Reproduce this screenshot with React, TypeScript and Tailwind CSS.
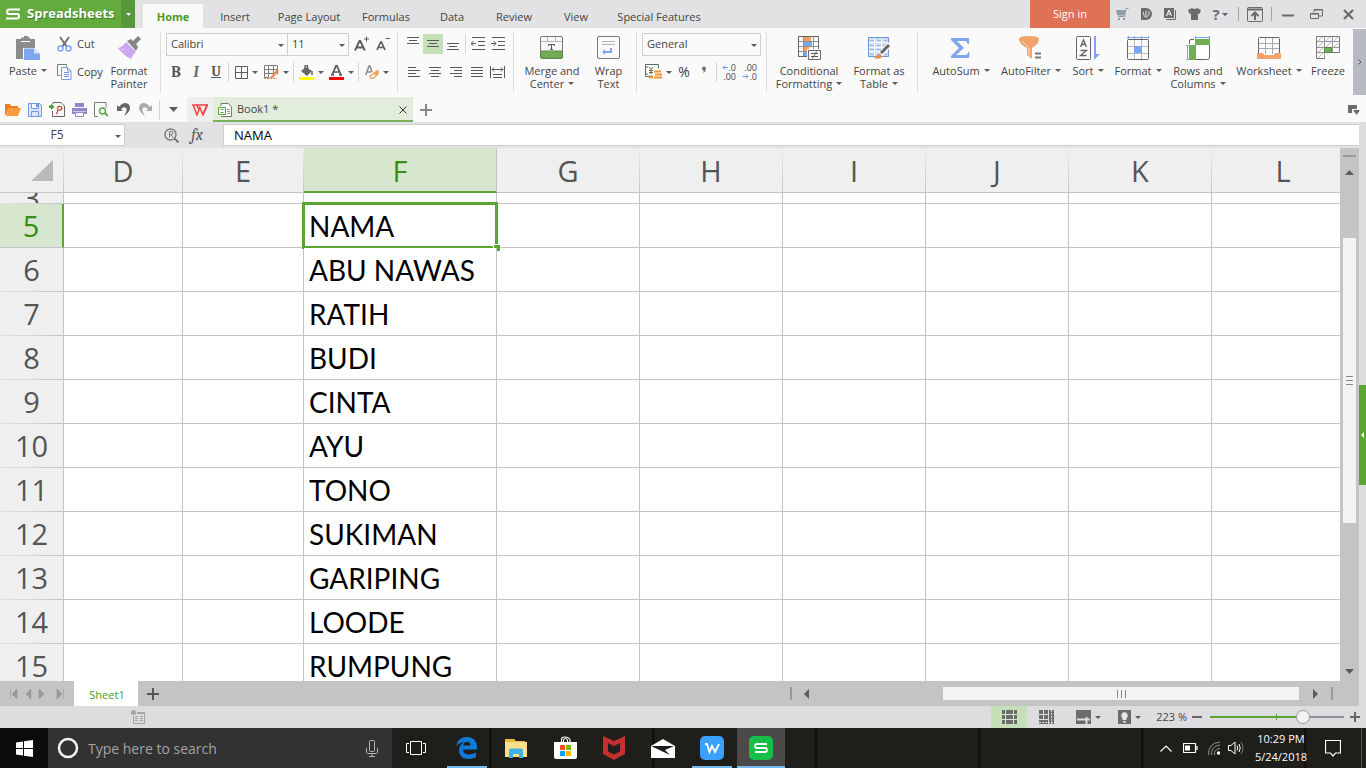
import React, { useState } from 'react';
import clsx from 'clsx';

type IconProps = {
  readonly w: number;
  readonly h: number;
  readonly className?: string;
  readonly children: React.ReactNode;
};

const Icon: React.FunctionComponent<IconProps> = ({
  w,
  h,
  className,
  children,
}) => (
  <svg
    width={w}
    height={h}
    viewBox={`0 0 ${w} ${h}`}
    className={clsx('shrink-0', className)}
    fill="none"
    aria-hidden="true"
  >
    {children}
  </svg>
);

const gray = '#6b6b6b';
const blue = '#7ea6f0';
const orange = '#f2a36b';
const green = '#72ad55';

const Caret: React.FunctionComponent<{ className?: string }> = ({
  className,
}) => (
  <Icon w={6} h={3} className={className}>
    <path d="M0 0h6L3 3z" fill="#5c5c5c" />
  </Icon>
);

// Draws a stack of horizontal strokes, used by all the alignment icons.
const Lines: React.FunctionComponent<{
  rows: [number, number, number][];
  h?: number;
  children?: React.ReactNode;
}> = ({ rows, h = 14, children }) => (
  <Icon w={14} h={h}>
    {rows.map(([x1, x2, y]) => (
      <path key={y} d={`M${x1} ${y + 0.5}H${x2}`} stroke="#595959" />
    ))}
    {children}
  </Icon>
);

/* ---------- title bar ---------- */

const tabs = [
  { title: 'Home', width: 'w-[60px]' },
  { title: 'Insert', width: 'w-16' },
  { title: 'Page Layout', width: 'w-[84px]' },
  { title: 'Formulas', width: 'w-[70px]' },
  { title: 'Data', width: 'w-[62px]' },
  { title: 'Review', width: 'w-[62px]' },
  { title: 'View', width: 'w-[62px]' },
  { title: 'Special Features', width: 'w-[104px]' },
];

const TitleBar = () => {
  const [active, setActive] = useState('Home');

  return (
    <header className="flex h-7 shrink-0 bg-[#e2e2e4]">
      <button className="flex w-[121px] items-center gap-[7px] bg-[#62ab3c] pl-[6px] text-[13px] font-bold text-white [text-shadow:1px_1px_0_#3f7d22]">
        <Icon w={14} h={12}>
          <path
            d="M14 1.5H3Q1.2 1.5 1.2 3.7T3 6h8.4q1.6 0 1.6 2.2T11.4 10.5H0"
            stroke="#fff"
            strokeWidth="2.2"
          />
        </Icon>
        Spreadsheets
      </button>
      <button
        aria-label="Application menu"
        className="flex w-[14px] items-center justify-center bg-[#57993a]"
      >
        <Icon w={5} h={3}>
          <path d="M0 0h5L2.500 3z" fill="#fff" />
        </Icon>
      </button>
      <nav className="ml-2 flex pt-1">
        {tabs.map((tab) => (
          <button
            key={tab.title}
            onClick={() => setActive(tab.title)}
            className={clsx(
              'pt-[2px] whitespace-nowrap',
              tab.width,
              active === tab.title
                ? 'bg-[#fafafa] font-bold text-[#4b9a28]'
                : 'text-[#444]'
            )}
          >
            {tab.title}
          </button>
        ))}
      </nav>
      <button className="ml-auto w-20 bg-[#df7254] text-white">Sign in</button>
      <div className="flex items-center pr-[2px]">
        <button aria-label="Store" className="flex w-6 justify-center">
          <Icon w={13} h={12}>
            <path d="M12.500.5H10L8.500 8.500H2" stroke="#929aa4" />
            <path d="M0 2h9.500L8.500 7.500H1.500zM2 10h2v2H2zM7 10h2v2H7z" fill="#929aa4" />
          </Icon>
        </button>
        <button aria-label="Docer" className="flex w-6 justify-center">
          <Icon w={11} h={12}>
            <path d="M0 0h5a6 6 0 0 1 0 12H0z" fill={gray} />
            <path d="M2.500 4q0 5 3 5.500M5 2.500v6M8 3q1 4-2.500 6.500" stroke="#e2e2e4" />
          </Icon>
        </button>
        <button aria-label="Fonts" className="flex w-6 justify-center">
          <Icon w={12} h={12}>
            <path d="M0 0h10v10H0z" fill={gray} />
            <path d="M11.500 2v9.500H2" stroke={gray} />
            <path d="M2.500 8 5 2l2.500 6M3.500 6h3" stroke="#fff" />
          </Icon>
        </button>
        <button aria-label="Skin" className="flex w-6 justify-center">
          <Icon w={13} h={12}>
            <path d="M0 2 4 0q2.500 2 5 0l4 2-1.500 4-1.500-.5V12H3V5.500L1.500 6z" fill={gray} />
          </Icon>
        </button>
        <button
          aria-label="Help"
          className="flex w-7 items-center justify-center gap-[2px] text-[15px] font-bold text-[#6b6b6b]"
        >
          ?<Caret />
        </button>
        <span className="mx-1 h-[14px] w-px bg-[#a5a5a7]" />
        <button aria-label="Hide ribbon" className="flex w-6 justify-center">
          <Icon w={16} h={15}>
            <rect x=".5" y=".5" width="15" height="14" rx="1" stroke={gray} />
            <path d="M1 2.500h14" stroke={gray} strokeWidth="2" />
            <path d="M8 13V6M4.500 9 8 5.500 11.500 9" stroke={gray} strokeWidth="2" />
          </Icon>
        </button>
        <span className="mx-1 h-[14px] w-px bg-[#a5a5a7]" />
        <button aria-label="Minimize" className="flex w-6 justify-center">
          <Icon w={12} h={12}>
            <path d="M0 7.500h12" stroke={gray} strokeWidth="2" />
          </Icon>
        </button>
        <button aria-label="Restore" className="flex w-8 justify-center">
          <Icon w={13} h={11}>
            <path d="M.5 4.500h8v5h-8zM.5 5h8M4 3.500v-3h8.500V7H9M4 1h8" stroke={gray} />
          </Icon>
        </button>
        <button aria-label="Close" className="flex w-8 justify-center">
          <Icon w={11} h={11}>
            <path d="m1 1 9 9M10 1l-9 9" stroke={gray} strokeWidth="2.200" />
          </Icon>
        </button>
      </div>
    </header>
  );
};

/* ---------- ribbon ---------- */

type BigButtonProps = {
  readonly width: string;
  readonly lines: string[];
  readonly caret?: boolean;
  readonly icon: React.ReactNode;
};

const BigButton: React.FunctionComponent<BigButtonProps> = ({
  width,
  lines,
  caret,
  icon,
}) => (
  <button
    className={clsx('flex shrink-0 flex-col items-center gap-1 pt-2', width)}
  >
    <span className="flex h-6 items-center">{icon}</span>
    <span className="block leading-[13px] whitespace-nowrap">
      {lines.map((line, i) => (
        <span key={line} className="flex items-center justify-center gap-1">
          {line}
          {caret && i === lines.length - 1 && <Caret />}
        </span>
      ))}
    </span>
  </button>
);

type ToolProps = {
  readonly label: string;
  readonly className?: string;
  readonly caret?: boolean;
  readonly children: React.ReactNode;
};

const Tool: React.FunctionComponent<ToolProps> = ({
  label,
  className = 'w-5',
  caret,
  children,
}) => (
  <button
    aria-label={label}
    className={clsx('flex h-5 items-center justify-center gap-1', className)}
  >
    {children}
    {caret && <Caret />}
  </button>
);

const Rule = () => <span className="mx-[2px] h-5 w-px bg-[#d4d4d6]" />;
const GroupRule = () => (
  <span className="mt-1 h-[60px] w-px shrink-0 bg-[#dcdcde]" />
);

const Picker: React.FunctionComponent<{
  label: string;
  value: string;
  className: string;
}> = ({ label, value, className }) => (
  <span
    className={clsx(
      'relative flex h-[23px] border border-[#cfcfd1] bg-[#fafafa]',
      className
    )}
  >
    <select
      aria-label={label}
      defaultValue={value}
      className="w-full appearance-none pl-1 outline-none"
    >
      <option>{value}</option>
    </select>
    <Caret className="pointer-events-none absolute top-[10px] right-[3px]" />
  </span>
);

const ClipboardGroup = () => (
  <section className="flex w-40 shrink-0">
    <BigButton
      width="w-14"
      lines={['Paste']}
      caret
      icon={
        <Icon w={24} h={24}>
          <path d="M0 3h5V1.500h3V0h4v1.500h2V3h5v9H7v11H0z" fill="#8c8c8c" />
          <path d="M5 5.500h9" stroke="#fafafa" />
          <path d="M8 12.500h10l6 5V24H8z" fill={blue} />
          <path d="M18 12.500v5h6z" fill="#fff" opacity=".7" />
        </Icon>
      }
    />
    <div className="flex w-12 flex-col gap-1 pt-1">
      <button className="flex h-6 items-center gap-[5px] pl-px">
        <Icon w={15} h={16}>
          <path d="m3 1 7 10M12 1 5 11" stroke={gray} strokeWidth="1.800" />
          <circle cx="3.500" cy="12.500" r="2.500" stroke={blue} strokeWidth="1.500" />
          <circle cx="11.500" cy="12.500" r="2.500" stroke={blue} strokeWidth="1.500" />
        </Icon>
        Cut
      </button>
      <button className="flex h-6 items-center gap-[5px] pl-px">
        <Icon w={15} h={16}>
          <path d="M3.500 11.500H.5V.5h9v2" stroke="#7d7d7d" />
          <path d="M4.500 3.500h6l3.500 3.500v8.500H4.500zM10.500 3.500V7H14M7 8.500h5M7 10.500h5M7 12.500h5" stroke="#6f99ea" />
        </Icon>
        Copy
      </button>
    </div>
    <BigButton
      width="w-[50px]"
      lines={['Format', 'Painter']}
      icon={
        <Icon w={23} h={24}>
          <path d="m9 5 4-2 2 2 5-5 3 3-5 5 2 3-2 4z" fill="#858585" />
          <path d="m8 6 10 10q-3 2-5 7Q6 20 0 12q5-1 8-6z" fill="#cda4f0" />
          <path d="m3 14 3-1M6 18l2-2" stroke="#e5cff8" />
        </Icon>
      }
    />
  </section>
);

const FontGroup = () => (
  <section className="flex w-[236px] shrink-0 flex-col gap-[6px] pt-[5px] pl-[5px]">
    <div className="flex">
      <Picker label="Font" value="Calibri" className="w-[122px]" />
      <Picker label="Font size" value="11" className="-ml-px w-[62px]" />
      <Tool label="Grow font" className="w-6">
        <Icon w={15} h={15}>
          <path d="M1 14.500 5.500 5h.8l4.500 9.500M3 11.500h6" stroke="#5d5d5d" strokeWidth="1.900" />
          <path d="M12.500.5v5M10 3h5" stroke="#5d5d5d" />
        </Icon>
      </Tool>
      <Tool label="Shrink font" className="w-5">
        <Icon w={14} h={15}>
          <path d="M1 14 4.700 6h.7L9 14M2.500 11.500h5" stroke="#5d5d5d" strokeWidth="1.700" />
          <path d="M9.500 2.500H14" stroke="#5d5d5d" />
        </Icon>
      </Tool>
    </div>
    <div className="flex items-center">
      <button className="h-5 w-5 font-serif text-[15px] leading-5 font-bold text-[#555]">
        B
      </button>
      <button className="h-5 w-5 font-serif text-[15px] leading-5 font-bold text-[#666] italic">
        I
      </button>
      <button className="h-5 w-5 font-serif text-[14px] leading-5 font-bold text-[#555] underline">
        U
      </button>
      <Rule />
      <Tool label="Borders" className="w-[30px]" caret>
        <Icon w={13} h={13}>
          <path d="M.5.5h12v12H.5zM6.500.5v12M.5 6.500h12" stroke="#5d5d5d" />
        </Icon>
      </Tool>
      <Tool label="Draw border" className="w-[30px]" caret>
        <Icon w={15} h={14}>
          <path d="M.5.5h13v9M.5.5v12h5M4.500.5v12M9.500.5v8M.5 4.500h13M.5 8.500h9" stroke="#7d7d7d" />
          <path d="m7 13 7-8" stroke="#f08345" strokeWidth="2.200" />
          <path d="M0 13.500h13" stroke="#f08345" strokeDasharray="2 1" />
        </Icon>
      </Tool>
      <Rule />
      <Tool label="Fill color" className="w-[30px]" caret>
        <Icon w={15} h={15}>
          <path d="m2 6 5-4 6 4-5 5z" fill="#666" />
          <path d="M6 5V1q1.500-2 2.500 0v3M13 6v4" stroke="#666" strokeWidth="1.500" />
          <path d="M0 12h15v3H0z" fill="#ff0" />
        </Icon>
      </Tool>
      <Tool label="Font color" className="w-[30px]" caret>
        <Icon w={15} h={15}>
          <path d="M3 10 7 .8h1L12 10M4.500 7h6M2 10h3M10 10h3" stroke="#5a5a5a" strokeWidth="1.700" />
          <path d="M0 12h15v3H0z" fill="#f00" />
        </Icon>
      </Tool>
      <Rule />
      <Tool label="Clear format" className="w-8" caret>
        <Icon w={14} h={15}>
          <path d="M.8 10 4 1h1l2 6M2 7h4" stroke="#8a8a8a" strokeWidth="1.500" />
          <path d="m5 11 4-3 4-2.500V9l-4 4-3 .5z" stroke="#f0a35f" strokeWidth="1.300" />
          <path d="m8 8.500 3 2.500L13 9V5.500z" fill="#f0a35f" />
        </Icon>
      </Tool>
    </div>
  </section>
);

const AlignGroup = () => (
  <section className="flex w-[115px] shrink-0 flex-col gap-2 pt-[6px] pl-[5px]">
    <div className="flex items-center">
      <Tool label="Top align">
        <Lines rows={[[1, 13, 0], [3, 11, 3], [1, 13, 6]]} />
      </Tool>
      <Tool label="Middle align" className="w-5 bg-[#c5e0b9]">
        <Lines rows={[[1, 13, 3], [3, 11, 6], [1, 13, 9]]} />
      </Tool>
      <Tool label="Bottom align">
        <Lines rows={[[1, 13, 6], [3, 11, 9], [1, 13, 12]]} />
      </Tool>
      <Rule />
      <Tool label="Decrease indent">
        <Lines rows={[[1, 14, 0], [7, 14, 4], [7, 14, 8], [1, 14, 12]]}>
          <path d="M0 6.500h5M2.500 4 0 6.500 2.500 9" stroke="#595959" />
        </Lines>
      </Tool>
      <Tool label="Increase indent">
        <Lines rows={[[1, 14, 0], [7, 14, 4], [7, 14, 8], [1, 14, 12]]}>
          <path d="M0 6.500h5M2.500 4 5 6.500 2.500 9" stroke="#595959" />
        </Lines>
      </Tool>
    </div>
    <div className="flex items-center">
      <Tool label="Align left" className="w-[21px]">
        <Lines rows={[[1, 9, 2], [1, 13, 5], [1, 9, 8], [1, 13, 11]]} />
      </Tool>
      <Tool label="Center" className="w-[21px]">
        <Lines rows={[[1, 13, 2], [3, 11, 5], [1, 13, 8], [3, 11, 11]]} />
      </Tool>
      <Tool label="Align right" className="w-[21px]">
        <Lines rows={[[1, 13, 2], [5, 13, 5], [1, 13, 8], [5, 13, 11]]} />
      </Tool>
      <Tool label="Justify" className="w-[21px]">
        <Lines rows={[[1, 13, 2], [1, 13, 5], [1, 13, 8], [1, 13, 11]]} />
      </Tool>
      <Tool label="Distributed" className="w-[21px]">
        <Icon w={15} h={14}>
          <path d="M.5 1v12M14.500 1v12M2 4.500h11M4 2.500l-2 2 2 2M11 2.500l2 2-2 2M3 9.500h9M3 12.500h9" stroke="#595959" />
        </Icon>
      </Tool>
    </div>
  </section>
);

const NumberGroup = () => (
  <section className="flex w-[129px] shrink-0 flex-col gap-[6px] pt-[5px] pl-[5px]">
    <Picker label="Number format" value="General" className="w-[119px]" />
    <div className="flex items-center">
      <Tool label="Currency" className="w-8" caret>
        <Icon w={17} h={16}>
          <path d="M8 12.500H.5V.5h13v4M3 10H1M3 3H1" stroke="#666" />
          <path d="m4 3 2 2.500L8 3M6 5.500V10M4 6.500h4M4 8.500h4" stroke="#666" />
          <path d="M9 6.500h7v2H9zM10 9.500h7v2h-7zM9 12.500h8v2H9zM4 11.500h4v3H4z" fill="#f0962e" />
        </Icon>
      </Tool>
      <button className="h-5 w-5 text-[14px] leading-5">%</button>
      <Tool label="Comma style" className="w-5">
        <Icon w={6} h={14}>
          <path d="M1 4a2 2 0 1 1 4-1q0 4-3 5 1-2 .5-2.500Q1 5.500 1 4z" fill="#777" />
        </Icon>
      </Tool>
      <Rule />
      <button className="flex h-5 w-[21px] flex-col items-end justify-center pr-1 text-[9px] leading-[9px]">
        <span className="flex items-center">
          <Icon w={6} h={5}>
            <path d="M1 2.500h5M3 .5l-2 2 2 2" stroke="#6f99ea" />
          </Icon>
          .0
        </span>
        <span>.00</span>
      </button>
      <button className="flex h-5 w-[21px] flex-col items-end justify-center pr-1 text-[9px] leading-[9px]">
        <span>.00</span>
        <span className="flex items-center">
          <Icon w={6} h={5}>
            <path d="M0 2.500h5M3 .5l2 2-2 2" stroke="#6f99ea" />
          </Icon>
          .0
        </span>
      </button>
    </div>
  </section>
);

const Ribbon = () => (
  <div className="flex h-[69px] shrink-0 bg-[#fafafa]">
    <ClipboardGroup />
    <GroupRule />
    <FontGroup />
    <GroupRule />
    <AlignGroup />
    <GroupRule />
    <section className="flex w-[122px] shrink-0 pl-[3px]">
      <BigButton
        width="w-[70px]"
        lines={['Merge and', 'Center']}
        caret
        icon={
          <Icon w={24} h={24}>
            <rect x=".5" y=".5" width="22" height="22" rx="1.500" stroke="#777" />
            <path d="M1 5.500h21M7.500 1v5M15.500 1v5" stroke="#b5b5b5" />
            <path d="M1 15h21v7H1z" fill={green} stroke="#5c9440" />
            <path d="M8.500 10V8.500h6V10M11.500 8.500v5M10 13.500h3" stroke="#555" />
          </Icon>
        }
      />
      <BigButton
        width="w-[43px]"
        lines={['Wrap', 'Text']}
        icon={
          <Icon w={23} h={24}>
            <rect x=".5" y=".5" width="22" height="22" rx="1.500" stroke="#777" />
            <path d="M5 5.500h13M5 8.500h13" stroke="#b5b5b5" />
            <path d="M15 12v5H8v2l-3-3 3-3v2h5v-3z" fill={blue} />
          </Icon>
        }
      />
    </section>
    <GroupRule />
    <NumberGroup />
    <GroupRule />
    <section className="flex w-[150px] shrink-0 pl-1">
      <BigButton
        width="w-[76px]"
        lines={['Conditional', 'Formatting']}
        caret
        icon={
          <Icon w={23} h={24}>
            <path d="M6 1h7v5H6zM6 11h5v4H6z" fill="#fa9d57" />
            <path d="M6 6h8v4H6zM6 16h3v5H6z" fill="#7ea6f0" />
            <path d="M.5.5h20v20H.5zM.5 5.500h20M.5 10.500h20M.5 15.500h20M5.500.5v20M15.500.5v20" stroke="#909090" />
            <path d="M.5.5h20v20H.5z" stroke="#666" />
            <path d="M9 13h14v11H9z" fill="#fafafa" />
            <path d="M10.500 14.500h12v9h-12z" fill="#fff" stroke="#666" />
            <path d="M13 17.500h7M13 20.500h7M18.500 15.500l-4 7" stroke="#555" />
          </Icon>
        }
      />
      <BigButton
        width="w-16"
        lines={['Format as', 'Table']}
        caret
        icon={
          <Icon w={23} h={24}>
            <path d="M.5 1.500h20v19H.5z" fill="#cfdcf5" stroke="#6e96e0" />
            <path d="M1 6.500h19M1 11.500h19M1 15.500h19M6.500 2v18M13.500 2v18" stroke="#fff" />
            <path d="M2 4.500h17M2 9.500h17M2 13.500h17M2 18.500h17" stroke="#a3b7df" strokeDasharray="4 3" />
            <path d="m13 18 9-10" stroke="#fafafa" strokeWidth="5" />
            <path d="m13 17 8-8" stroke="#666" strokeWidth="3" />
            <path d="M5 22q3 0 4-3 3-2 5 1 0 4-9 2z" fill="#f08a45" />
          </Icon>
        }
      />
    </section>
    <GroupRule />
    <section className="flex min-w-0 flex-1 pl-2">
      <BigButton
        width="w-[70px]"
        lines={['AutoSum']}
        caret
        icon={
          <Icon w={20} h={22}>
            <path d="M0 1h18v6h-1.500q0-3-3-3H6l7 7-8 7h9q3 0 3-3H18.500L18 21H0v-2l8-8-8-8z" fill={blue} />
          </Icon>
        }
      />
      <BigButton
        width="w-[70px]"
        lines={['AutoFilter']}
        caret
        icon={
          <Icon w={24} h={24}>
            <path d="M0 3q0-3 10-3t10 3q0 5-7 9v11l-5-4v-7Q0 8 0 3z" fill={orange} />
            <path d="M3 5q4 4 7 7v7" stroke="#fbe0cb" />
            <path d="M16 17.500h6M16 21.500h6" stroke="#777" strokeWidth="2" />
          </Icon>
        }
      />
      <BigButton
        width="w-11"
        lines={['Sort']}
        caret
        icon={
          <Icon w={24} h={24}>
            <rect x=".5" y=".5" width="14" height="23" rx="1" stroke="#666" />
            <path d="m4.500 11 3-7 3 7M5.500 8.500h4M4.500 14.500h6l-6 5h6" stroke="#666" strokeWidth="1.300" />
            <path d="M19 0v22" stroke={blue} strokeWidth="2" />
            <path d="M18 18h6l-6 6z" fill={blue} />
          </Icon>
        }
      />
      <BigButton
        width="w-14"
        lines={['Format']}
        caret
        icon={
          <Icon w={23} h={24}>
            <path d="M0 1.500h22M1.500 0v3M7.500 0v3M14.500 0v3M21.500 0v3" stroke={blue} />
            <path d="M1 10.500h20M1 17.500h20M7.500 4v19M14.500 4v19" stroke="#bbb" />
            <rect x=".5" y="3.500" width="21" height="20" rx="1" stroke="#666" />
            <path d="M7 10h8v7H7z" fill={blue} />
          </Icon>
        }
      />
      <BigButton
        width="w-16"
        lines={['Rows and', 'Columns']}
        caret
        icon={
          <Icon w={25} h={24}>
            <path d="M9 1.500h15M9.500 0v3M23.500 0v3M1.500 9v15M0 9.500h3M0 23.500h3" stroke={blue} />
            <path d="M9 3h15v6H9zM3 9h7v15H3z" fill={green} />
            <path d="M3.500 8V5q0-1.500 1.500-1.500h3" stroke="#666" />
            <path d="M10.500 9.500h13v13.500h-13z" fill="#fff" />
            <path d="M23.500 9v12q0 2.500-2 2.500H10" stroke="#666" />
          </Icon>
        }
      />
      <BigButton
        width="w-[78px]"
        lines={['Worksheet']}
        caret
        icon={
          <Icon w={24} h={24}>
            <rect x="1.500" y="1.500" width="21" height="18" rx="1" stroke="#666" />
            <path d="M2 7.500h20M2 12.500h20M8.500 2v16M15.500 2v16" stroke="#aaa" />
            <path d="M0 17h5q2 0 2 2h10q0-2 2-2h5v5q0 1-1 1H1q-1 0-1-1z" fill={orange} />
          </Icon>
        }
      />
      <BigButton
        width="w-10"
        lines={['Freeze']}
        icon={
          <Icon w={24} h={24}>
            <path d="M.5 5.500h23M.5 11.500h23M8.500.5v16M16.500.5v16M.5 16.500h8v6" stroke="#999" />
            <path d="m2 5 4-4M10 5l4-4M18 5l4-4M2 11l5-5M2 16l5-4M2 22l5-5M10 11l5-5M18 11l4-4" stroke="#bbb" />
            <path d="M9 22.500H.5V.5h23v16H16" stroke="#777" />
            <path d="M8.500 11.500h7v5h-7z" fill={green} stroke="#4f8d34" />
          </Icon>
        }
      />
    </section>
    <button
      aria-label="Scroll ribbon"
      className="mt-px mb-[2px] flex w-[13px] shrink-0 items-center justify-center bg-[#b8bac2]"
    >
      <Icon w={4} h={6}>
        <path d="m.5.500 2.500 2.500-2.500 2.500" stroke="#555" />
      </Icon>
    </button>
  </div>
);

/* ---------- quick access and document tabs ---------- */

const DocumentBar = () => (
  <div className="flex h-[25px] shrink-0 items-center bg-[#fafafa]">
    <div className="flex items-center pl-px">
      <Tool label="Open" className="w-[23px]">
        <Icon w={16} h={12}>
          <path d="M0 11V0h5l1 2h7v2H4L1 11z" fill="#e87f22" />
          <path d="M4 4h12l-3 8H1z" fill="#fa9a3c" />
        </Icon>
      </Tool>
      <Tool label="Save" className="w-[22px]">
        <Icon w={14} h={14}>
          <path d="M.5.500h11l2 2v11H.5zM3.500.5v5h7v-5M3.500 13V8.500h7V13" stroke="#6f99ea" fill="#dbe6fb" />
          <path d="M8 1h2v3H8z" fill="#6f99ea" />
        </Icon>
      </Tool>
      <Tool label="Export to PDF" className="w-[22px]">
        <Icon w={16} h={15}>
          <path d="M4 2V.5h8l3.500 3.500v10.500H3.500V9" stroke="#666" />
          <path d="M7 12q2-1 2-7.500 4-.5 4 1.500T9.500 8.500" stroke="#d0403a" strokeWidth="1.200" />
          <path d="M0 3.500h2V1.500l3.500 3.500L2 8V6H0z" fill="#4f9a2f" />
        </Icon>
      </Tool>
      <Tool label="Print" className="w-[22px]">
        <Icon w={15} h={14}>
          <path d="M3 0h9v4H3zM0 5h15v6H0z" fill="#8e88cc" />
          <path d="M3.500 9.500h8v4h-8z" fill="#fafafa" stroke="#8e88cc" />
          <path d="M1 8.500h13" stroke="#c9c6ea" />
        </Icon>
      </Tool>
      <Tool label="Print preview" className="w-[22px]">
        <Icon w={14} h={15}>
          <path d="M4 14.500H.5V.5H12v5" stroke="#777" />
          <circle cx="8.500" cy="9" r="3" stroke="#5fa641" strokeWidth="1.400" />
          <path d="m11 11 3 3" stroke="#5fa641" strokeWidth="1.800" />
        </Icon>
      </Tool>
      <Tool label="Undo" className="w-[22px]">
        <Icon w={13} h={13}>
          <path d="M0 2v6h6L4 6q3-3 5-1t-2 8q6-4 6-8T9 0Q5-.5 2 4z" fill="#666" />
        </Icon>
      </Tool>
      <Tool label="Redo" className="w-[22px]">
        <Icon w={13} h={13}>
          <path d="M13 2v6H7l2-2Q6 3 4 5t2 8Q0 9 0 5t4-5q4-.5 7 4z" fill="#aaa" />
        </Icon>
      </Tool>
      <span className="ml-[3px] h-5 w-px bg-[#d4d4d6]" />
      <Tool label="More commands" className="w-[27px]">
        <Icon w={9} h={5}>
          <path d="M0 0h9L4.500 5z" fill="#5c5c5c" />
        </Icon>
      </Tool>
    </div>
    <button
      aria-label="WPS home"
      className="flex h-full w-[26px] items-center justify-center bg-[#eeeeef]"
    >
      <Icon w={16} h={12}>
        <path d="M0 1h15.500L11 11 7.800 3.500 5 11 1.500 2M4.500 1l3 5M15 1l-4 9" stroke="#f0413f" strokeWidth="1.500" />
      </Icon>
    </button>
    <div className="flex h-full w-[200px] items-center gap-[5px] border-b-2 border-[#7ab35b] bg-[#e2eedb] pt-[2px] pr-[6px] pl-[5px]">
      <Icon w={14} h={14}>
        <path d="M3 3V.5h7.500L13.500 4v9.500H3" stroke="#777" fill="#fff" />
        <path d="M.5 4.500h7v7h-7zM2.500 6.500h3M2.500 9.500h3" stroke="#5fa641" fill="#fff" />
        <path d="M9 6.500h3M9 8.500h3M9 10.500h3" stroke="#999" />
      </Icon>
      <a href="#book1" className="flex-1 text-[#444]">
        Book1 *
      </a>
      <button aria-label="Close Book1">
        <Icon w={8} h={8}>
          <path d="m.5.500 7 7M7.500.5l-7 7" stroke="#333" />
        </Icon>
      </button>
    </div>
    <Tool label="New document" className="w-[26px]">
      <Icon w={12} h={12}>
        <path d="M6 0v12M0 6h12" stroke="#888" strokeWidth="2" />
      </Icon>
    </Tool>
    <Tool label="Document list" className="ml-auto w-6">
      <Icon w={12} h={10}>
        <path d="M0 0h9v4H4v4H0z" fill="#6b6b6b" />
        <path d="M5 5h7L8.500 10z" fill="#6b6b6b" />
      </Icon>
    </Tool>
  </div>
);

const FormulaBar = () => (
  <div className="flex h-[26px] shrink-0 items-center bg-[#e2e2e4]">
    <div className="relative flex h-[22px] w-[125px] border border-l-0 border-[#cdcdd0] bg-white">
      <input
        aria-label="Name box"
        defaultValue="F5"
        className="w-full pr-[10px] text-center text-[12px] outline-none"
      />
      <Caret className="absolute top-[10px] right-[3px]" />
    </div>
    <div className="flex w-[98px] items-center justify-end gap-3 pr-5">
      <button aria-label="Find">
        <Icon w={15} h={15}>
          <circle cx="6.500" cy="6.500" r="5.500" stroke="#777" strokeWidth="1.400" />
          <path d="m10.500 10.500 4 4" stroke="#777" strokeWidth="2" />
          <path d="M5.500 9.500V3.500h2q1.500 0 1.500 1.500T7 6.500H5.500M7 6.500l2 3" stroke="#777" />
        </Icon>
      </button>
      <button className="font-serif text-[16px] leading-5 text-[#555] italic">
        fx
      </button>
    </div>
    <input
      aria-label="Formula"
      defaultValue="NAMA"
      className="h-[22px] min-w-0 flex-1 border border-r-0 border-[#cdcdd0] bg-white pl-[10px] text-[13px] text-black outline-none"
    />
  </div>
);

/* ---------- grid ---------- */

const columns = ['D', 'E', 'F', 'G', 'H', 'I', 'J', 'K', 'L'];
const names = [
  'NAMA',
  'ABU NAWAS',
  'RATIH',
  'BUDI',
  'CINTA',
  'AYU',
  'TONO',
  'SUKIMAN',
  'GARIPING',
  'LOODE',
  'RUMPUNG',
];
const firstRow = 5;
const cellClass = 'border-r border-b border-[#c4c4c6] bg-white p-0';
// Header rules fade out towards the outer edge of the sheet.
const fadeUp = '[border-image:linear-gradient(#ececec,#c4c4c6)_1]';
const fadeLeft = '[border-image:linear-gradient(to_right,#e4e4e4,#c4c4c6)_1]';

const Grid = () => (
  <div className="min-w-0 flex-1 overflow-hidden bg-white">
    <table className="w-full min-w-[1355px] table-fixed border-separate border-spacing-0">
      <colgroup>
        <col className="w-16" />
        <col className="w-[119px]" />
        <col className="w-[121px]" />
        <col className="w-[193px]" />
        <col className="w-[143px]" />
        <col className="w-[143px]" />
        <col className="w-[143px]" />
        <col className="w-[143px]" />
        <col className="w-[143px]" />
        <col />
      </colgroup>
      <thead>
        <tr className="h-[45px] text-[29px] leading-8 text-[#555]">
          <th className={clsx('border-r border-b bg-[#efefef] p-0', fadeUp)}>
            <Icon w={22} h={21} className="ml-[31px]">
              <path d="M22 0v21H0z" fill="#b9b9b9" />
            </Icon>
          </th>
          {columns.map((column) => (
            <th
              key={column}
              className={clsx(
                'border-r p-0 pt-[2px] font-normal',
                column === 'F'
                  ? 'border-b-2 border-r-[#c4c4c6] border-b-[#5ba532] bg-[#d7e7cf] text-[#358f12]'
                  : ['border-b bg-[#efefef]', fadeUp]
              )}
            >
              {column}
            </th>
          ))}
        </tr>
      </thead>
      <tbody>
        <tr>
          <th
            className={clsx(
              'border-r border-b bg-[#efefef] p-0 text-[29px] font-normal text-[#555]',
              fadeLeft
            )}
          >
            <div className="flex h-[10px] items-center justify-center overflow-hidden">
              3
            </div>
          </th>
          {columns.map((column) => (
            <td key={column} className={cellClass} />
          ))}
        </tr>
        {names.map((name, i) => (
          <tr key={name} className="h-11">
            <th
              className={clsx(
                'border-b p-0 text-[29px] leading-8 font-normal',
                i === 0
                  ? 'border-r-2 border-r-[#5ba532] border-b-[#c4c4c6] bg-[#d7e7cf] text-[#358f12]'
                  : ['border-r bg-[#efefef] text-[#555]', fadeLeft]
              )}
            >
              {firstRow + i}
            </th>
            {columns.map((column) => (
              <td
                key={column}
                className={clsx(
                  cellClass,
                  column === 'F' &&
                    'relative pl-[5px] font-[Lato,Carlito,sans-serif] text-[28px] leading-8 whitespace-nowrap text-black'
                )}
              >
                {column === 'F' && name}
                {column === 'F' && i === 0 && (
                  <span className="absolute -inset-[2px] border-3 border-[#5ba532]">
                    <span className="absolute -right-[5px] -bottom-[5px] h-[7px] w-[7px] border-t border-l border-white bg-[#5ba532]" />
                  </span>
                )}
              </td>
            ))}
          </tr>
        ))}
      </tbody>
    </table>
  </div>
);

const VerticalScroll = () => (
  <div className="flex w-[19px] shrink-0 flex-col items-center bg-[#c4c4c6] pt-[7px]">
    <span className="h-[2px] w-[13px] bg-[#999]" />
    <button aria-label="Scroll up" className="mt-[13px]">
      <Icon w={9} h={5}>
        <path d="M0 5h9L4.500 0z" fill="#5c5c5c" />
      </Icon>
    </button>
    <div className="mt-[63px] mb-[146px] flex w-[13px] flex-1 flex-col items-center justify-center gap-[3px] bg-[#f3f3f3]">
      <span className="h-px w-[7px] bg-[#888]" />
      <span className="h-px w-[7px] bg-[#888]" />
      <span className="h-px w-[7px] bg-[#888]" />
    </div>
    <button aria-label="Scroll down" className="mb-[7px]">
      <Icon w={9} h={5}>
        <path d="M0 0h9L4.500 5z" fill="#5c5c5c" />
      </Icon>
    </button>
  </div>
);

const sheetNav = [
  { label: 'First sheet', d: 'M1.500 0v10M8 0v10L3 5z', width: 'w-[18px]' },
  { label: 'Previous sheet', d: 'M7 0v10L2 5z', width: 'w-[13px]' },
  { label: 'Next sheet', d: 'M2 0v10l5-5z', width: 'w-[13px]' },
  { label: 'Last sheet', d: 'M7.500 0v10M1 0v10l5-5z', width: 'w-[25px]' },
];

const SheetBar = () => (
  <div className="flex h-[25px] shrink-0 items-center bg-[#c4c4c6]">
    <div className="flex w-[74px] items-center pl-1">
      {sheetNav.map((item) => (
        <button
          key={item.label}
          aria-label={item.label}
          className={clsx('flex justify-center', item.width)}
        >
          <Icon w={9} h={10}>
            <path d={item.d} fill="#999" stroke="#999" strokeWidth=".6" />
          </Icon>
        </button>
      ))}
    </div>
    <button className="h-full w-16 bg-white pt-1 pl-[2px] text-[#4b9a28]">
      Sheet1
    </button>
    <Tool label="Add sheet" className="w-[30px]">
      <Icon w={12} h={12}>
        <path d="M6 0v12M0 6h12" stroke="#555" strokeWidth="2" />
      </Icon>
    </Tool>
    <div className="ml-auto flex w-[569px] items-center">
      <span className="h-[13px] w-[2px] bg-[#999]" />
      <button aria-label="Scroll left" className="ml-3">
        <Icon w={5} h={10}>
          <path d="M5 0v10L0 5z" fill="#5c5c5c" />
        </Icon>
      </button>
      <div className="mr-[14px] ml-auto flex h-[13px] w-[356px] items-center justify-center gap-[3px] bg-[#f3f3f3]">
        <span className="h-2 w-px bg-[#888]" />
        <span className="h-2 w-px bg-[#888]" />
        <span className="h-2 w-px bg-[#888]" />
      </div>
      <button aria-label="Scroll right" className="mr-[13px]">
        <Icon w={5} h={10}>
          <path d="M0 0v10l5-5z" fill="#5c5c5c" />
        </Icon>
      </button>
      <span className="mr-[26px] h-[13px] w-[2px] bg-[#999]" />
    </div>
  </div>
);

const StatusBar = () => (
  <footer className="flex h-[22px] shrink-0 items-center bg-[#dddde0]">
    <button aria-label="Macro" className="ml-[131px]">
      <Icon w={14} h={14}>
        <circle cx="2.500" cy="2.500" r="2.500" fill="#a5a5a5" />
        <path d="M2.500 6v7.500h11v-11H6M6 3.500h7" stroke="#a5a5a5" />
        <path d="M4 6.500h3M9 6.500h3M4 8.500h3M9 8.500h3M4 10.500h3M9 10.500h3" stroke="#a5a5a5" />
      </Icon>
    </button>
    <button
      aria-label="Normal view"
      className="ml-auto flex h-full w-9 items-center justify-center bg-[#c5e0b9]"
    >
      <Icon w={15} h={14}>
        <path d="M0 0h15v14H0z" fill={gray} />
        <path d="M0 4.500h15M0 9.500h15M3.500 0v14M11.500 0v14" stroke="#d5e8cc" />
      </Icon>
    </button>
    <Tool label="Page break view" className="w-[38px]">
      <Icon w={15} h={14}>
        <path d="M0 0h15v14H0z" fill={gray} />
        <path d="M0 4.500h10M0 9.500h10M4.500 0v10M9.500 0v14" stroke="#dddde0" />
        <path d="M12.500 0v14M0 12.500h15" stroke="#dddde0" strokeDasharray="2 1" />
      </Icon>
    </Tool>
    <Tool label="Reading layout" className="w-[46px]" caret>
      <Icon w={15} h={14}>
        <path d="M0 0h15v14H0z" fill={gray} />
        <path d="M10.500 7v7M1 9.500h13" stroke="#dddde0" strokeWidth="2" />
      </Icon>
    </Tool>
    <Tool label="Eye protection" className="w-9" caret>
      <Icon w={13} h={14}>
        <path d="M0 0h13v14H0z" fill={gray} />
        <path d="M6.500 2a3.500 3.500 0 0 1 2 6.200V10h-4V8.200A3.500 3.500 0 0 1 6.500 2zM5 11h3v1.500H5z" fill="#e4e4e6" />
      </Icon>
    </Tool>
    <span className="w-11 pr-1 text-right">223 %</span>
    <button aria-label="Zoom out" className="mr-2 ml-px">
      <Icon w={10} h={10}>
        <path d="M0 5h10" stroke="#666" strokeWidth="2" />
      </Icon>
    </button>
    <div className="relative flex w-[134px] items-center">
      <span className="absolute left-[66px] h-[6px] w-px bg-[#5ba532]" />
      <input
        type="range"
        aria-label="Zoom"
        min={0}
        max={100}
        defaultValue={72}
        className="relative h-[2px] w-full appearance-none bg-linear-to-r from-[#5ba532] from-70% to-[#8f8f99] to-70% [&::-webkit-slider-thumb]:h-[14px] [&::-webkit-slider-thumb]:w-[14px] [&::-webkit-slider-thumb]:appearance-none [&::-webkit-slider-thumb]:rounded-full [&::-webkit-slider-thumb]:border [&::-webkit-slider-thumb]:border-[#999] [&::-webkit-slider-thumb]:bg-[#f3f3f3]"
      />
    </div>
    <button aria-label="Zoom in" className="mr-[6px] ml-[6px]">
      <Icon w={10} h={10}>
        <path d="M5 0v10M0 5h10" stroke="#666" strokeWidth="2" />
      </Icon>
    </button>
  </footer>
);

/* ---------- taskbar ---------- */

const apps = [
  {
    label: 'Microsoft Edge',
    state: 'running',
    icon: (
      <Icon w={22} h={22}>
        <path
          d="M0 9.500Q1.500 0 11 0q9.500 0 10 10v2.500H7q.3 4.500 5.500 5 4 0 7.500-2v4.700Q17 22 12 22 3.500 21.500 3 13.500 3 8 8 5 3 5.500 0 9.500zM7.200 8.500h7.300Q14.300 4.800 11 4.800T7.200 8.500z"
          fill="#0f7ad8"
        />
      </Icon>
    ),
  },
  {
    label: 'File Explorer',
    state: '',
    icon: (
      <Icon w={22} h={19}>
        <path d="M0 0h9l2 2h9v3H0z" fill="#e9b93d" />
        <path d="M0 3h22v15H0z" fill="#fbdf8c" />
        <path d="M4 11q0-1.500 1.500-1.500h11q1.500 0 1.500 1.500v8h-4v-4H8v4H4z" fill="#3fb3e8" />
      </Icon>
    ),
  },
  {
    label: 'Store',
    state: '',
    icon: (
      <Icon w={23} h={24}>
        <path d="M7.500 8V4q0-3 3-3 5 0 5.500 3v3M9.500 7V4q2-3 4 0v3" stroke="#fff" strokeWidth="1.200" />
        <path d="M0 6h23v15q0 2-2 2H2q-2 0-2-2z" fill="#fff" />
        <path d="M6 9h5v5H6z" fill="#f25022" />
        <path d="M12 9h5v5h-5z" fill="#7fba00" />
        <path d="M6 15h5v5H6z" fill="#00a4ef" />
        <path d="M12 15h5v5h-5z" fill="#ffb900" />
      </Icon>
    ),
  },
  {
    label: 'McAfee',
    state: '',
    icon: (
      <Icon w={22} h={24}>
        <path d="m0 0 11 5L22 0v18l-11 6-11-6z" fill="#c4302e" />
        <path d="m5 7 6 3 6-3v8.500l-6 3-6-3z" fill="#22201e" />
      </Icon>
    ),
  },
  {
    label: 'Mail',
    state: '',
    icon: (
      <Icon w={24} h={19}>
        <path d="M0 7 12 0l12 7v12H0z" fill="#fff" />
        <path d="M1 7h22l-9 4 5 5L2 8z" fill="#1c1b19" />
      </Icon>
    ),
  },
  {
    label: 'WPS Writer',
    state: 'running',
    icon: (
      <Icon w={24} h={24}>
        <rect width="24" height="24" rx="5" fill="#3aa0fb" />
        <path d="M5 8h2l2.500 8L12 10l3 6 4-8" stroke="#fff" strokeWidth="1.800" />
      </Icon>
    ),
  },
  {
    label: 'WPS Spreadsheets',
    state: 'active',
    icon: (
      <Icon w={24} h={24}>
        <rect width="24" height="24" rx="5" fill="#16bd47" />
        <path
          d="M18 8H8Q6 8 6 10t2 2h8q2 0 2 2t-2 2H6"
          stroke="#fff"
          strokeWidth="1.800"
        />
      </Icon>
    ),
  },
];

const Taskbar = () => (
  <div className="flex h-10 shrink-0 bg-[#1f1e1b] bg-[repeating-linear-gradient(90deg,#11100f_0,#11100f_2px,transparent_3px,transparent_163px)] text-white">
    <button
      aria-label="Start"
      className="flex w-12 items-center justify-center bg-[#0c0c0c]"
    >
      <Icon w={17} h={17}>
        <path d="M0 2.500 7 1.500V8H0zM8 1.300 17 0v8H8zM0 9h7v6.500l-7-1zM8 9h9v8l-9-1.300z" fill="#fff" />
      </Icon>
    </button>
    <label className="flex w-[344px] items-center gap-[9px] bg-[#323232] pl-[9px]">
      <Icon w={22} h={22}>
        <circle cx="11" cy="11" r="9" stroke="#f2f2f2" strokeWidth="2.500" />
      </Icon>
      <input
        placeholder="Type here to search"
        aria-label="Search"
        className="min-w-0 flex-1 text-[14px] outline-none placeholder:text-[#a3a3a3]"
      />
      <Icon w={12} h={17} className="mr-[14px]">
        <rect x="3.500" y=".5" width="5" height="11" rx="1" stroke="#b5b5b5" />
        <path d="M.5 8v4.500q0 1 1 1h9q1 0 1-1V8M6 13.500v3M3 16.500h6" stroke="#b5b5b5" />
      </Icon>
    </label>
    <button
      aria-label="Task view"
      className="mr-[3px] flex w-12 items-center justify-center"
    >
      <Icon w={20} h={14}>
        <path d="M4.500.5h11v13h-11zM3 2.500H.5v9H3M17 2.500h2.500v9H17" stroke="#fff" />
      </Icon>
    </button>
    <div className="flex gap-px">
      {apps.map((app) => (
        <button
          key={app.label}
          aria-label={app.label}
          className={clsx(
            'relative flex w-12 items-center justify-center',
            app.state === 'active' && 'bg-[#4b4a48]'
          )}
        >
          {app.icon}
          {app.state && (
            <span
              className={clsx(
                'absolute bottom-0 h-[2px] bg-[#76b9ed]',
                app.state === 'active' ? 'inset-x-0' : 'inset-x-1'
              )}
            />
          )}
        </button>
      ))}
    </div>
    <div className="ml-auto flex items-center">
      <button aria-label="Hidden icons" className="flex w-6 justify-center">
        <Icon w={12} h={7}>
          <path d="m.5 6.500 5.500-5.500 5.500 5.500" stroke="#fff" strokeWidth="1.200" />
        </Icon>
      </button>
      <button aria-label="Battery" className="flex w-6 justify-center">
        <Icon w={15} h={10}>
          <path d="M.5.500h12v9H.5zM14 3v4" stroke="#fff" strokeWidth="1.200" />
          <path d="M2 2.500h5v5H2z" fill="#fff" />
        </Icon>
      </button>
      <button aria-label="Network" className="flex w-6 justify-center">
        <Icon w={12} h={14}>
          <path d="M.5 14Q0 2 12 1M3.500 14Q3 5 12 4M6.500 14Q6 8 12 7.500" stroke="#8d8d8d" />
          <circle cx="10.500" cy="12" r="1.700" fill="#fff" />
        </Icon>
      </button>
      <button aria-label="Volume" className="flex w-5 justify-center">
        <Icon w={16} h={14}>
          <path d="M.5 4.500H3L7 1v12L3 9.500H.5zM9 4.500q1.500 2.500 0 5M11 3q2.500 4 0 8" stroke="#fff" />
          <path d="M13 1q4 6 0 12" stroke="#777" />
        </Icon>
      </button>
      <button className="w-[70px] text-center leading-[18px] whitespace-nowrap">
        10:29 PM
        <br />
        5/24/2018
      </button>
      <button aria-label="Notifications" className="flex w-[34px] justify-center">
        <Icon w={16} h={17}>
          <path d="M.5.500h15v12.500h-5L8 16l-2.500-3h-5z" stroke="#fff" strokeWidth="1.200" />
        </Icon>
      </button>
      <span className="mr-1 ml-[11px] h-full w-px bg-[#555]" />
    </div>
  </div>
);

export default function App() {
  return (
    <div className="flex h-screen flex-col overflow-hidden font-['Open_Sans','Noto_Sans',sans-serif] text-[11px] text-[#444]">
      <TitleBar />
      <Ribbon />
      <DocumentBar />
      <main className="flex min-h-0 flex-1">
        <div className="flex min-w-0 flex-1 flex-col">
          <FormulaBar />
          <div className="flex min-h-0 flex-1">
            <Grid />
            <VerticalScroll />
          </div>
          <SheetBar />
        </div>
        <aside className="flex w-[7px] shrink-0 flex-col bg-[#dddde0] pt-[263px]">
          <button
            aria-label="Open side panel"
            className="flex h-[100px] items-center justify-center bg-[#5ba532]"
          >
            <Icon w={3} h={6}>
              <path d="M3 0v6L0 3z" fill="#fff" />
            </Icon>
          </button>
        </aside>
      </main>
      <StatusBar />
      <Taskbar />
    </div>
  );
}
